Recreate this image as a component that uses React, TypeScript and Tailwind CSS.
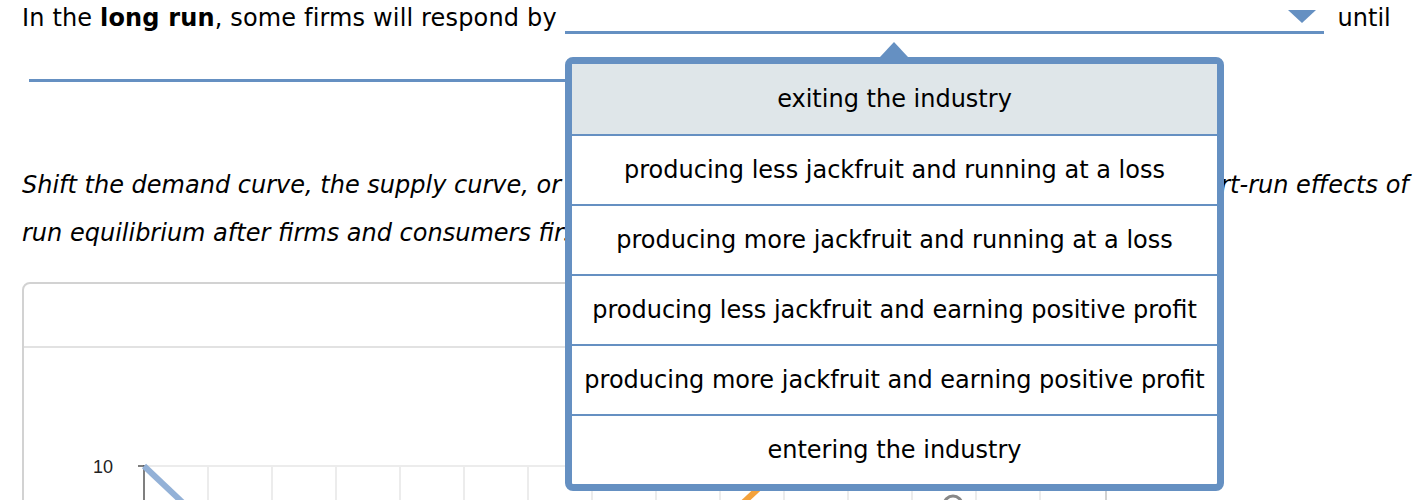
import { type ReactElement } from "react";

const BLUE = "#6590c2";

const options = [
    "exiting the industry",
    "producing less jackfruit and running at a loss",
    "producing more jackfruit and running at a loss",
    "producing less jackfruit and earning positive profit",
    "producing more jackfruit and earning positive profit",
    "entering the industry",
];

const OptionsMenu = (): ReactElement => (
    <div className="absolute left-[565px] top-[42px] flex flex-col items-start">
        {/* Pointer */}
        <svg width="28" height="15" viewBox="0 0 28 15" className="ml-[315px] block">
            <polygon points="14,0 28,15 0,15" fill={BLUE} />
        </svg>
        <ul className="w-[659px] border-[7px] border-[#6590c2] rounded-[8px] bg-white overflow-hidden">
            {options.map((label, i) => (
                <li
                    key={label}
                    className={
                        i === 0
                            ? "h-[70px] flex items-center justify-center bg-[#dfe6e9]"
                            : "h-[70px] flex items-center justify-center border-t-2 border-[#6590c2]"
                    }
                >
                    {label}
                </li>
            ))}
        </ul>
    </div>
);

const Chart = (): ReactElement => {
    const cols = Array.from({ length: 14 }, (_, i) => 120 + (i + 1) * 64);
    return (
        <div className="ml-[22px] mt-[25px] w-[1085px] h-[240px] border-2 border-[#d2d2d2] rounded-[8px]">
            {/* Header */}
            <div className="h-[64px] border-b-2 border-[#e2e2e2]" />
            {/* Graph */}
            <svg width="1081" height="170" className="block">
                <line x1="120" y1="118" x2="1081" y2="118" stroke="#ececec" strokeWidth="2" />
                {cols.map((x) => (
                    <line key={x} x1={x} y1="118" x2={x} y2="170" stroke="#ececec" strokeWidth="2" />
                ))}
                <text
                    x="89"
                    y="125"
                    textAnchor="end"
                    fontSize="18"
                    fill="#222"
                    style={{ fontFamily: '"Liberation Sans", Arial, sans-serif' }}
                >
                    10
                </text>
                <line x1="114" y1="118" x2="120" y2="118" stroke="#555" strokeWidth="1.5" />
                <line x1="120" y1="117" x2="120" y2="170" stroke="#555" strokeWidth="1.5" />
                {/* Demand */}
                <line x1="120" y1="118" x2="175" y2="170" stroke="#93b1d7" strokeWidth="6" />
                {/* Supply */}
                <line x1="708" y1="165" x2="800" y2="80" stroke="#f4a23c" strokeWidth="6" />
                {/* Point */}
                <circle cx="929" cy="157" r="9" fill="white" stroke="#888" strokeWidth="3" />
            </svg>
        </div>
    );
};

const App = (): ReactElement => (
    <div
        className="relative w-[1416px] h-[500px] overflow-hidden bg-white text-black text-[24px]"
        style={{ fontFamily: '"DejaVu Sans", Verdana, sans-serif' }}
    >
        {/* Question line */}
        <div className="flex items-start h-[36px] leading-[36px] pl-[22px] whitespace-pre">
            <span className="tracking-[0.16px]">
                In the <b>long run</b>, some firms will respond by{" "}
            </span>
            <div className="w-[759px] h-[34px] border-b-[3px] border-[#6590c2] flex justify-end items-start pt-[10px] pr-[8px]">
                <svg width="28" height="13" viewBox="0 0 28 13">
                    <polygon points="0,0 28,0 14,13" fill={BLUE} />
                </svg>
            </div>
            <span className="ml-[14px]">until</span>
        </div>
        <div className="ml-[29px] w-[880px] h-[46px] border-b-[3px] border-[#6590c2]" />

        {/* Instructions */}
        <p className="mt-[79px] pl-[22px] italic leading-[48px] whitespace-nowrap">
            Shift the demand curve, the supply curve, or both on the following diagram below to depict the short-run effects of
            <br />
            run equilibrium after firms and consumers first respond.
        </p>

        <Chart />
        <OptionsMenu />
    </div>
);

export default App;
